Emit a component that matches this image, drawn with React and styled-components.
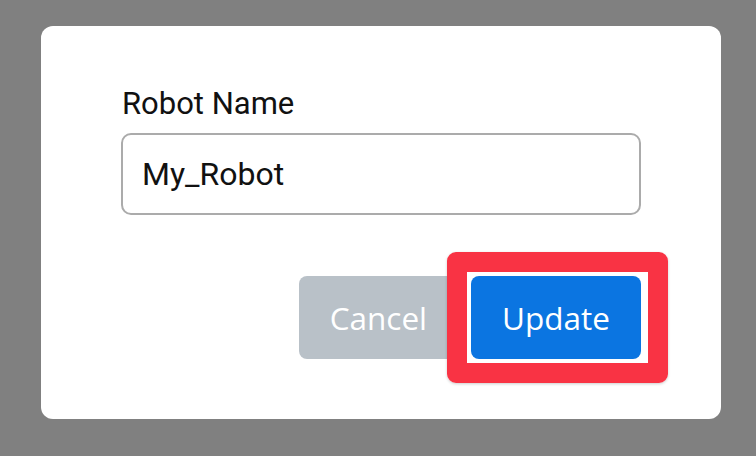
import React from "react";
import styled, { createGlobalStyle } from "styled-components";

const Global = createGlobalStyle`
  html, body {
    margin: 0;
    padding: 0;
    background: #808080;
    width: 756px;
    height: 456px;
    overflow: hidden;
  }
  * { box-sizing: border-box; }
`;

const Page = styled.div`
  padding: 26px 0 0 41px;
`;

const Dialog = styled.div`
  width: 680px;
  height: 393px;
  background: #ffffff;
  border-radius: 12px;
  padding: 60px 80px;
  display: flex;
  flex-direction: column;
`;

const Label = styled.label`
  font-family: Roboto, "Liberation Sans", sans-serif;
  font-size: 31px;
  line-height: 35px;
  color: #111;
  margin-left: 1px;
`;

const Input = styled.input`
  margin-top: 12px;
  width: 520px;
  height: 82px;
  border: 2px solid #ababab;
  border-radius: 10px;
  padding: 0 19px;
  font-family: Roboto, "Liberation Sans", sans-serif;
  font-size: 32px;
  color: #111;
  outline: none;
  background: #fff;
`;

const Actions = styled.div`
  margin-top: 61px;
  display: flex;
  justify-content: flex-end;
  gap: 13px;
`;

const Button = styled.button`
  position: relative;
  height: 83px;
  padding: 0 31px;
  border: none;
  border-radius: 8px;
  font-family: "Open Sans", "Liberation Sans", sans-serif;
  font-size: 31.5px;
  color: #fff;
  background: ${(p) => (p.$primary ? "#0b75e1" : "#b9c1c8")};
  cursor: pointer;
`;

const Highlight = styled.div`
  position: absolute;
  left: -24px;
  top: -24px;
  width: 221px;
  height: 131px;
  border: 20px solid #f93344;
  border-radius: 9px;
  box-shadow: 0 1px 3px rgba(0, 0, 0, 0.2);
  pointer-events: none;
`;

const Wrap = styled.div`
  position: relative;
  display: flex;
`;

export default function App() {
  return (
    <>
      <Global />
      <Page>
        <Dialog>
          <Label htmlFor="robot-name">Robot Name</Label>
          <Input id="robot-name" defaultValue="My_Robot" />
          <Actions>
            <Button>Cancel</Button>
            <Wrap>
              <Highlight />
              <Button $primary>Update</Button>
            </Wrap>
          </Actions>
        </Dialog>
      </Page>
    </>
  );
}
